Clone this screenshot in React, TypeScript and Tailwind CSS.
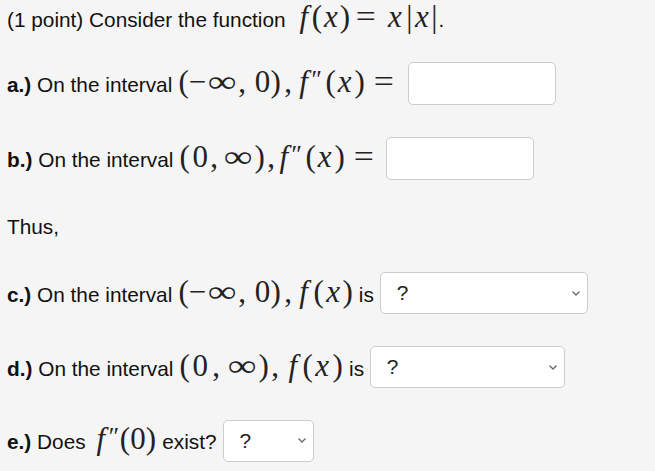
import React from "react";

const mathFont = "font-['Liberation_Serif','DejaVu_Serif',serif]";

function M({ children }: { children: React.ReactNode }) {
  return (
    <span className={`${mathFont} text-[31px] leading-none text-[#222] whitespace-nowrap`}>
      {children}
    </span>
  );
}

function G({
  w,
  ml = "",
  it = false,
  extra = "",
  children,
}: {
  w: string;
  ml?: string;
  it?: boolean;
  extra?: string;
  children: React.ReactNode;
}) {
  return (
    <span className={`inline-flex justify-center ${w} ${ml} ${it ? "italic" : ""}`}>
      <span className={`inline-block ${extra}`}>{children}</span>
    </span>
  );
}

const LP = (ml = "") => <G w="w-[11px]" ml={ml}>(</G>;
const RP = (ml = "") => <G w="w-[11px]" ml={ml}>)</G>;
const F = (ml = "") => <G w="w-[15px]" ml={ml} it>f</G>;
const X = (ml = "") => <G w="w-[17px]" ml={ml} it>x</G>;
const PP = (ml = "") => (
  <G w="w-[11px]" ml={ml} extra="text-[25px] -translate-y-[4px]">″</G>
);
const INF = (ml = "") => (
  <G w="w-[32px]" ml={ml} extra="scale-x-[1.3]">∞</G>
);
const EQ = (ml = "") => <G w="w-[22px]" ml={ml} extra="scale-x-[1.15]">=</G>;
const CM = (ml = "") => <G w="w-[8px]" ml={ml}>,</G>;
const ZERO = (ml = "") => <G w="w-[15px]" ml={ml}>0</G>;
const MINUS = (ml = "") => <G w="w-[17px]" ml={ml}>−</G>;
const BAR = (ml = "") => <G w="w-[8px]" ml={ml}>|</G>;

function Chevron() {
  return (
    <svg width="10" height="7" viewBox="0 0 10 7" className="shrink-0">
      <path d="M1.5 1.5 L5 5 L8.5 1.5" fill="none" stroke="#666" strokeWidth="1.3" />
    </svg>
  );
}

function Select({ width, ml = "" }: { width: string; ml?: string }) {
  return (
    <div
      className={`${width} ${ml} shrink-0 h-[42px] bg-white border border-[#cccccc] rounded-[5px] flex items-center justify-between pl-[16px] pr-[6px]`}
    >
      <span className="text-[20.8px] text-[#222]">?</span>
      <Chevron />
    </div>
  );
}

function Input({ width, ml = "" }: { width: string; ml?: string }) {
  return (
    <div className={`${width} ${ml} shrink-0 h-[43px] bg-white border border-[#cccccc] rounded-[5px]`} />
  );
}

export default function App() {
  return (
    <div className="w-[655px] h-[471px] bg-[#f5f5f5] font-['Liberation_Sans',Arial,sans-serif] text-[20.8px] text-[#111] pl-[7px] overflow-hidden">
      {/* title */}
      <div className="h-[36px] flex items-center">
        <span className="whitespace-nowrap">
          (1 point) Consider the function&nbsp;
          <M>
            {F("ml-[5px]")}
            {LP()}
            {X()}
            {RP()}
            {EQ("ml-[4px]")}
            {X("ml-[10px]")}
            {BAR("ml-[2px]")}
            {X()}
            {BAR()}
          </M>
          .
        </span>
      </div>

      {/* a */}
      <div className="mt-[26px] h-[43px] flex items-center">
        <span className="whitespace-nowrap">
          <b>a.)</b> On the interval&nbsp;
          <M>
            {LP()}
            {MINUS()}
            {INF()}
            {CM()}
            {ZERO("ml-[9px]")}
            {RP()}
            {CM("ml-[3px]")}
            {F("ml-[4px]")}
            {PP()}
            {LP("ml-[3px]")}
            {X()}
            {RP("ml-[1px]")}
            {EQ("ml-[8px]")}
          </M>
        </span>
        <Input width="w-[148px]" ml="ml-[13px]" />
      </div>

      {/* b */}
      <div className="mt-[32px] h-[43px] flex items-center">
        <span className="whitespace-nowrap">
          <b>b.)</b> On the interval&nbsp;
          <M>
            {LP()}
            <G w="w-[16px]" ml="ml-[2px]">0</G>
            {CM("ml-[2px]")}
            {INF("ml-[4px]")}
            {RP()}
            {CM("ml-[2px]")}
            {F("ml-[1px]")}
            {PP()}
            {LP("ml-[3px]")}
            {X()}
            {RP("ml-[1px]")}
            {EQ("ml-[8px]")}
          </M>
        </span>
        <Input width="w-[148px]" ml="ml-[11px]" />
      </div>

      {/* Thus */}
      <div className="mt-[25px] h-[43px] flex items-center">
        <span>Thus,</span>
      </div>

      {/* c */}
      <div className="mt-[24px] h-[42px] flex items-center">
        <span className="whitespace-nowrap">
          <b>c.)</b> On the interval&nbsp;
          <M>
            {LP()}
            {MINUS()}
            {INF()}
            {CM()}
            {ZERO("ml-[9px]")}
            {RP()}
            {CM("ml-[3px]")}
            {F("ml-[4px]")}
            {LP("ml-[2px]")}
            <G w="w-[18px]" it>x</G>
            {RP()}
          </M>
          &nbsp;is&nbsp;
        </span>
        <Select width="w-[208px]" />
      </div>

      {/* d */}
      <div className="mt-[32px] h-[42px] flex items-center">
        <span className="whitespace-nowrap">
          <b>d.)</b> On the interval&nbsp;
          <M>
            {LP()}
            <G w="w-[16px]" ml="ml-[2px]">0</G>
            {CM("ml-[4px]")}
            {INF("ml-[6px]")}
            {RP()}
            {CM("ml-[2px]")}
            {F("ml-[6px]")}
            {LP("ml-[2px]")}
            <G w="w-[18px]" it>x</G>
            {RP("ml-[1px]")}
          </M>
          &nbsp;is&nbsp;
        </span>
        <Select width="w-[195px]" />
      </div>

      {/* e */}
      <div className="mt-[31px] h-[43px] flex items-center">
        <span className="whitespace-nowrap">
          <b>e.)</b> Does&nbsp;
          <M>
            {F("ml-[2px]")}
            {PP()}
            {LP()}
            {ZERO()}
            {RP()}
          </M>
          &nbsp;exist?
        </span>
        <Select width="w-[91px]" ml="ml-[6px]" />
      </div>
    </div>
  );
}
